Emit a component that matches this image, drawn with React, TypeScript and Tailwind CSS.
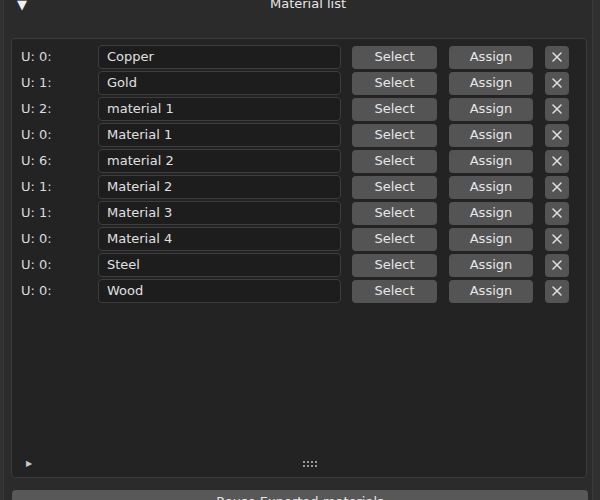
import React from 'react';

interface MaterialSlot {
  users: number;
  name: string;
}

const slots: MaterialSlot[] = [
  { users: 0, name: 'Copper' },
  { users: 1, name: 'Gold' },
  { users: 2, name: 'material 1' },
  { users: 0, name: 'Material 1' },
  { users: 6, name: 'material 2' },
  { users: 1, name: 'Material 2' },
  { users: 1, name: 'Material 3' },
  { users: 0, name: 'Material 4' },
  { users: 0, name: 'Steel' },
  { users: 0, name: 'Wood' },
];

function CloseIcon() {
  return (
    <svg width="12" height="12" viewBox="0 0 12 12" fill="none">
      <path d="M2 2 L10 10 M10 2 L2 10" stroke="#e0e0e0" strokeWidth="1.5" strokeLinecap="round" />
    </svg>
  );
}

function Grip() {
  return (
    <svg width="14" height="7" viewBox="0 0 14 7" fill="#9a9a9a">
      {[0, 4, 8, 12].map((x) => (
        <React.Fragment key={x}>
          <rect x={x} y={0} width="2" height="2" />
          <rect x={x} y={4} width="2" height="2" />
        </React.Fragment>
      ))}
    </svg>
  );
}

function SlotRow({ slot }: { slot: MaterialSlot }) {
  return (
    <div className="flex items-center h-[24px]">
      <span className="w-[77px] text-[#dcdcdc]">U: {slot.users}:</span>
      <div className="w-[243px] h-[24px] flex items-center pl-[8px] bg-[#1d1d1d] border border-[#3d3d3d] rounded-[4px] text-[#e0e0e0]">
        {slot.name}
      </div>
      <button className="ml-[11px] w-[85px] h-[23px] rounded-[4px] bg-[#545454] text-[#e6e6e6]">Select</button>
      <button className="ml-[12px] w-[84px] h-[23px] rounded-[4px] bg-[#545454] text-[#e6e6e6]">Assign</button>
      <button className="ml-[12px] w-[24px] h-[23px] rounded-[4px] bg-[#545454] flex items-center justify-center">
        <CloseIcon />
      </button>
    </div>
  );
}

export default function App() {
  return (
    <div className="w-[600px] h-[500px] overflow-hidden flex bg-[#2b2b2b] text-[13px] font-['DejaVu_Sans',sans-serif]">
      <div className="w-[4px] bg-[#323232] border-r border-[#393939]" />

      <div className="flex-1 flex flex-col pl-[7px] pr-[5px]">
        <div className="h-[38px] shrink-0 -ml-[7px] -mr-[5px]">
          <div className="-mt-[8px] h-[24px] flex items-center pl-[13px] pr-[5px]">
            <span className="w-[12px] text-[13px] text-[#f0f0f0] leading-none">▼</span>
            <span className="flex-1 text-center text-[#e6e6e6]">Material list</span>
          </div>
        </div>

        <div className="h-[440px] shrink-0 flex flex-col bg-[#232323] border border-[#3b3b3b] rounded-[4px] pt-[6px] pl-[9px] pb-[9px]">
          <div className="flex flex-col gap-[2px]">
            {slots.map((s, i) => (
              <SlotRow key={i} slot={s} />
            ))}
          </div>
          <div className="mt-auto flex items-center h-[8px]">
            <span className="ml-[5px] text-[8px] leading-none text-[#c8c8c8]">▶</span>
            <div className="ml-[271px]">
              <Grip />
            </div>
          </div>
        </div>

        <button className="mt-[12px] ml-[1px] mr-[-1px] h-[24px] shrink-0 rounded-[4px] bg-[#585858] text-[#e6e6e6]">
          Reuse Exported materials
        </button>
      </div>

      <div className="w-[8px] bg-[#303030] border-l border-[#3a3a3a]" />
    </div>
  );
}
